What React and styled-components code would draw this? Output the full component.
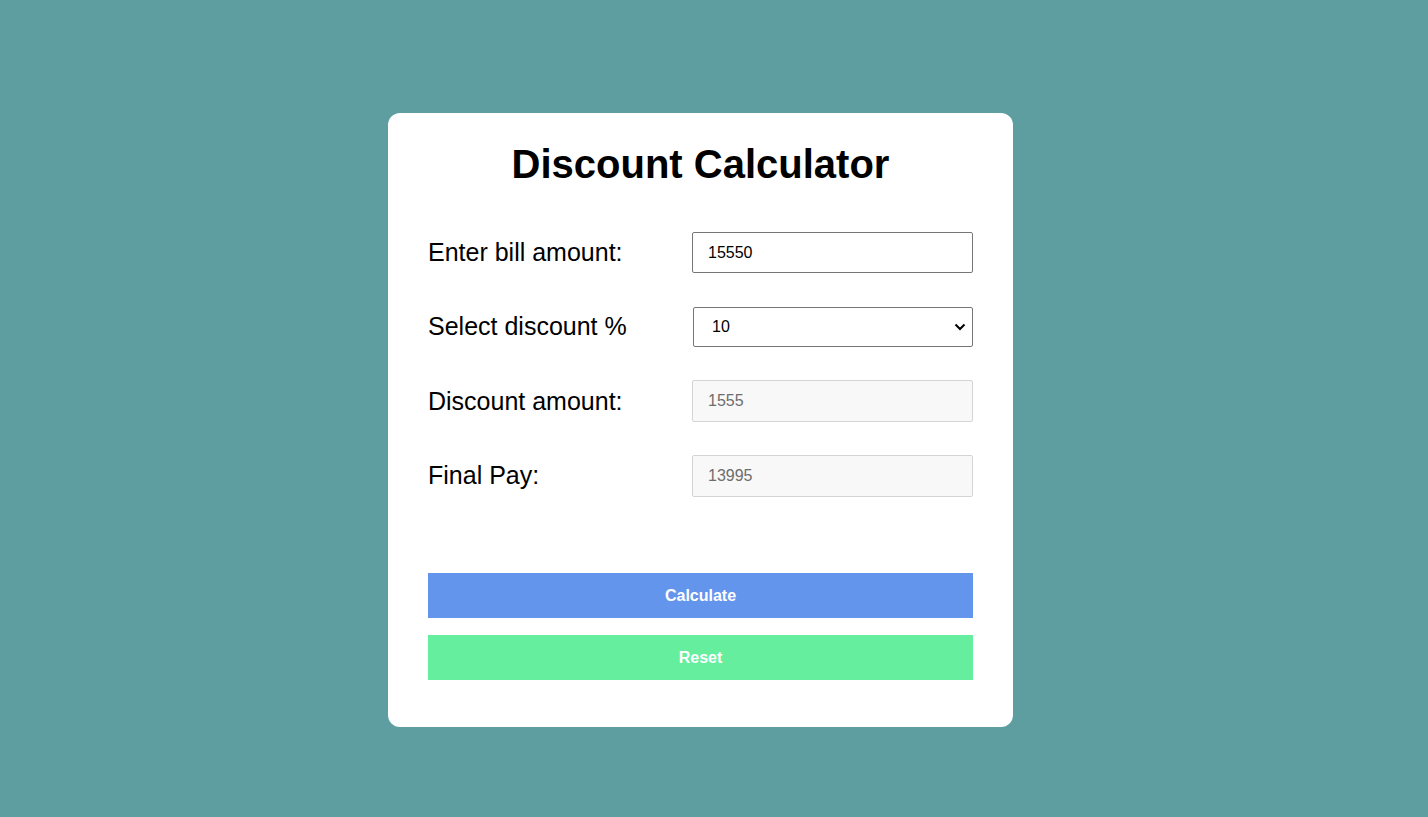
import React, { useState } from "react";
import styled, { createGlobalStyle } from "styled-components";

const Global = createGlobalStyle`
  html, body { margin: 0; padding: 0; }
  body {
    background: #5f9ea0;
    font-family: "Liberation Sans", Arial, sans-serif;
    min-height: 817px;
  }
`;

const Page = styled.div`
  display: flex;
  justify-content: center;
  padding: 113px 27px 0 0;
`;

const Card = styled.div`
  width: 625px;
  box-sizing: border-box;
  background: #fff;
  border-radius: 12px;
  padding: 28px 40px 47px;
`;

const Title = styled.h1`
  margin: 0 0 45px;
  text-align: center;
  font-size: 40px;
  font-weight: 700;
  line-height: 46px;
  color: #000;
`;

const Form = styled.div`
  display: flex;
  flex-direction: column;
  gap: 33.2px;
`;

const Row = styled.div`
  display: grid;
  grid-template-columns: 1fr 281px;
  align-items: center;
  height: 41px;
`;

const Label = styled.label`
  font-size: 25px;
  color: #000;
`;

const Field = styled.input`
  box-sizing: border-box;
  width: 281px;
  height: ${(p) => (p.disabled ? "42px" : "41px")};
  padding: 0 15px;
  font-family: "Liberation Sans", Arial, sans-serif;
  font-size: 16px;
  border-radius: 2px;
  border: 1px solid ${(p) => (p.disabled ? "#d4d4d4" : "#767676")};
  background: ${(p) => (p.disabled ? "#f8f8f8" : "#fff")};
  color: ${(p) => (p.disabled ? "#6d6d6d" : "#000")};
  outline: none;
  &:disabled { -webkit-text-fill-color: #6d6d6d; opacity: 1; }
`;

const SelectWrap = styled.div`
  position: relative;
  width: 280px;
  height: 40px;
  margin-left: 1px;
`;

const Select = styled.select`
  appearance: none;
  box-sizing: border-box;
  width: 100%;
  height: 100%;
  padding: 0 30px 0 18px;
  font-family: "Liberation Sans", Arial, sans-serif;
  font-size: 16px;
  color: #000;
  background: #fff;
  border: 1px solid #767676;
  border-radius: 2px;
  outline: none;
`;

const Chevron = styled.svg`
  position: absolute;
  right: 7px;
  top: 16px;
  pointer-events: none;
`;

const Buttons = styled.div`
  display: flex;
  flex-direction: column;
  gap: 17px;
  margin-top: 77.5px;
`;

const Button = styled.button`
  height: 45px;
  width: 100%;
  border: none;
  background: ${(p) => p.$bg};
  color: #fff;
  font-family: "Liberation Sans", Arial, sans-serif;
  font-weight: 700;
  font-size: 16px;
  cursor: pointer;
`;

export default function App() {
  const [bill, setBill] = useState("15550");
  const [pct, setPct] = useState("10");
  const [disc, setDisc] = useState("1555");
  const [final, setFinal] = useState("13995");

  const calc = () => {
    const b = parseFloat(bill) || 0;
    const d = (b * parseFloat(pct)) / 100;
    setDisc(String(d));
    setFinal(String(b - d));
  };
  const reset = () => {
    setBill("");
    setPct("10");
    setDisc("");
    setFinal("");
  };

  return (
    <>
      <Global />
      <Page>
        <Card>
          <Title>Discount Calculator</Title>
          <Form>
            <Row>
              <Label>Enter bill amount:</Label>
              <Field value={bill} onChange={(e) => setBill(e.target.value)} />
            </Row>
            <Row>
              <Label>Select discount %</Label>
              <SelectWrap>
                <Select value={pct} onChange={(e) => setPct(e.target.value)}>
                  {["5", "10", "15", "20", "25", "30"].map((v) => (
                    <option key={v} value={v}>{v}</option>
                  ))}
                </Select>
                <Chevron width="12" height="8" viewBox="0 0 12 8">
                  <path d="M1.5 1.5 L6 6 L10.5 1.5" fill="none" stroke="#000" strokeWidth="2" />
                </Chevron>
              </SelectWrap>
            </Row>
            <Row>
              <Label>Discount amount:</Label>
              <Field disabled value={disc} readOnly />
            </Row>
            <Row>
              <Label>Final Pay:</Label>
              <Field disabled value={final} readOnly />
            </Row>
          </Form>
          <Buttons>
            <Button $bg="#6495ed" onClick={calc}>Calculate</Button>
            <Button $bg="#64ee9e" onClick={reset}>Reset</Button>
          </Buttons>
        </Card>
      </Page>
    </>
  );
}
